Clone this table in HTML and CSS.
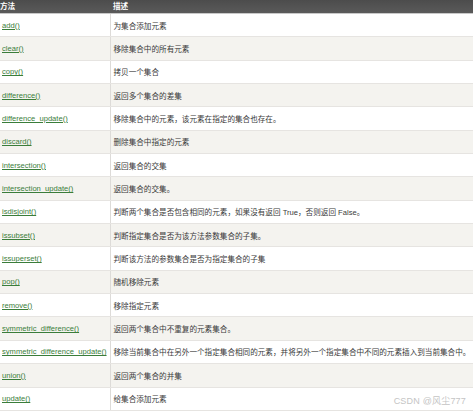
FILE: index.html
```html
<!DOCTYPE html>
<html lang="zh">
<head>
<meta charset="utf-8">
<title>Python 集合方法</title>
<link rel="stylesheet" href="styles.css">
</head>
<body>
<div class="page">
<table class="ref">
  <thead>
    <tr><th class="c1">方法</th><th class="c2">描述</th></tr>
  </thead>
  <tbody>
    <tr><td class="c1"><a href="#">add()</a></td><td class="c2">为集合添加元素</td></tr>
    <tr><td class="c1"><a href="#">clear()</a></td><td class="c2">移除集合中的所有元素</td></tr>
    <tr><td class="c1"><a href="#">copy()</a></td><td class="c2">拷贝一个集合</td></tr>
    <tr><td class="c1"><a href="#">difference()</a></td><td class="c2">返回多个集合的差集</td></tr>
    <tr><td class="c1"><a href="#">difference_update()</a></td><td class="c2">移除集合中的元素，该元素在指定的集合也存在。</td></tr>
    <tr><td class="c1"><a href="#">discard()</a></td><td class="c2">删除集合中指定的元素</td></tr>
    <tr><td class="c1"><a href="#">intersection()</a></td><td class="c2">返回集合的交集</td></tr>
    <tr><td class="c1"><a href="#">intersection_update()</a></td><td class="c2">返回集合的交集。</td></tr>
    <tr><td class="c1"><a href="#">isdisjoint()</a></td><td class="c2">判断两个集合是否包含相同的元素，如果没有返回 True，否则返回 False。</td></tr>
    <tr><td class="c1"><a href="#">issubset()</a></td><td class="c2">判断指定集合是否为该方法参数集合的子集。</td></tr>
    <tr><td class="c1"><a href="#">issuperset()</a></td><td class="c2">判断该方法的参数集合是否为指定集合的子集</td></tr>
    <tr><td class="c1"><a href="#">pop()</a></td><td class="c2">随机移除元素</td></tr>
    <tr><td class="c1"><a href="#">remove()</a></td><td class="c2">移除指定元素</td></tr>
    <tr><td class="c1"><a href="#">symmetric_difference()</a></td><td class="c2">返回两个集合中不重复的元素集合。</td></tr>
    <tr><td class="c1"><a href="#">symmetric_difference_update()</a></td><td class="c2">移除当前集合中在另外一个指定集合相同的元素，并将另外一个指定集合中不同的元素插入到当前集合中。</td></tr>
    <tr><td class="c1"><a href="#">union()</a></td><td class="c2">返回两个集合的并集</td></tr>
    <tr><td class="c1"><a href="#">update()</a></td><td class="c2">给集合添加元素</td></tr>
  </tbody>
</table>
<div class="watermark">CSDN @风尘777</div>
</div>
</body>
</html>
```
FILE: styles.css
```css
html, body {
  margin: 0;
  padding: 0;
  background: #ffffff;
}

.page {
  position: relative;
  width: 474px;
  height: 411px;
  overflow: hidden;
  font-family: "Liberation Sans", "Noto Sans CJK SC", sans-serif;
  font-size: 7.6px;
  color: #3a3a3a;
}

.ref {
  width: 473px;
  border-collapse: collapse;
  table-layout: fixed;
}

.ref th {
  height: 13px;
  padding: 0;
  background: linear-gradient(#4c4c4c, #5a5a5a);
  color: #ffffff;
  font-weight: bold;
  text-align: left;
  border-bottom: 1px solid #c8c8c8;
  line-height: 13px;
}

.ref th.c1 {
  width: 110px;
  padding-left: 0;
}

.ref th.c2 {
  padding-left: 3px;
}

.ref td {
  height: 22.35px;
  padding: 0;
  border-bottom: 1px solid #e6e4e1;
  vertical-align: middle;
  white-space: nowrap;
}

.ref td.c1 {
  padding-left: 2px;
  border-right: 1px solid #dddbd8;
}

.ref td.c2 {
  padding-left: 3px;
}

.ref tbody tr:nth-child(even) td {
  background: #f4f3ef;
}

.ref a {
  color: #3a7d3a;
  text-decoration: underline;
}

.watermark {
  position: absolute;
  right: 8px;
  bottom: 4px;
  font-size: 9px;
  color: #c4c4c4;
  letter-spacing: 0.2px;
}
```
